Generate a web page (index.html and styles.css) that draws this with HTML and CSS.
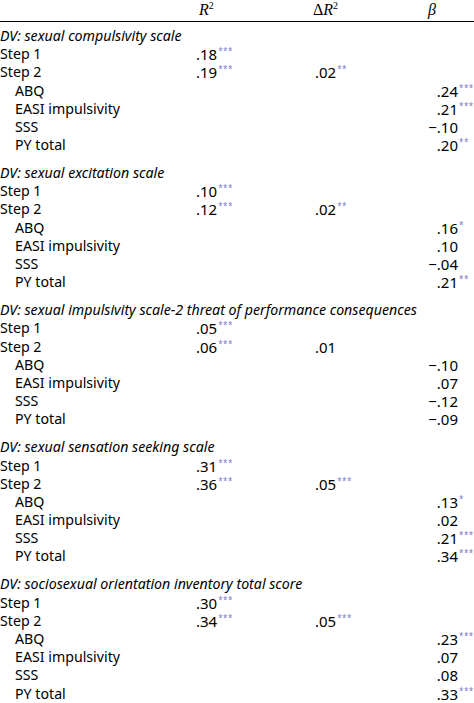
FILE: index.html
```html
<!DOCTYPE html>
<html>
<head>
<meta charset="utf-8">
<link rel="stylesheet" href="styles.css">
</head>
<body>
<div class="tbl">
  <div class="row head">
    <div></div>
    <div class="h r2"><i>R</i><sup>2</sup></div>
    <div class="h dr2">Δ<i>R</i><sup>2</sup></div>
    <div class="h beta"><i>β</i></div>
  </div>

  <div class="section">
    <div class="row"><div class="dv">DV: sexual compulsivity scale</div></div>
    <div class="row"><div>Step 1</div><div class="n">.18<span class="s">***</span></div></div>
    <div class="row"><div>Step 2</div><div class="n">.19<span class="s">***</span></div><div class="n">.02<span class="s">**</span></div></div>
    <div class="row"><div class="ind">ABQ</div><div></div><div></div><div class="b">.24<span class="s">***</span></div></div>
    <div class="row"><div class="ind">EASI impulsivity</div><div></div><div></div><div class="b">.21<span class="s">***</span></div></div>
    <div class="row"><div class="ind">SSS</div><div></div><div></div><div class="b">−.10<span class="s"></span></div></div>
    <div class="row"><div class="ind">PY total</div><div></div><div></div><div class="b">.20<span class="s">**</span></div></div>
  </div>

  <div class="section">
    <div class="row"><div class="dv">DV: sexual excitation scale</div></div>
    <div class="row"><div>Step 1</div><div class="n">.10<span class="s">***</span></div></div>
    <div class="row"><div>Step 2</div><div class="n">.12<span class="s">***</span></div><div class="n">.02<span class="s">**</span></div></div>
    <div class="row"><div class="ind">ABQ</div><div></div><div></div><div class="b">.16<span class="s">*</span></div></div>
    <div class="row"><div class="ind">EASI impulsivity</div><div></div><div></div><div class="b">.10<span class="s"></span></div></div>
    <div class="row"><div class="ind">SSS</div><div></div><div></div><div class="b">−.04<span class="s"></span></div></div>
    <div class="row"><div class="ind">PY total</div><div></div><div></div><div class="b">.21<span class="s">**</span></div></div>
  </div>

  <div class="section">
    <div class="row"><div class="dv">DV: sexual impulsivity scale-2 threat of performance consequences</div></div>
    <div class="row"><div>Step 1</div><div class="n">.05<span class="s">***</span></div></div>
    <div class="row"><div>Step 2</div><div class="n">.06<span class="s">***</span></div><div class="n">.01</div></div>
    <div class="row"><div class="ind">ABQ</div><div></div><div></div><div class="b">−.10<span class="s"></span></div></div>
    <div class="row"><div class="ind">EASI impulsivity</div><div></div><div></div><div class="b">.07<span class="s"></span></div></div>
    <div class="row"><div class="ind">SSS</div><div></div><div></div><div class="b">−.12<span class="s"></span></div></div>
    <div class="row"><div class="ind">PY total</div><div></div><div></div><div class="b">−.09<span class="s"></span></div></div>
  </div>

  <div class="section">
    <div class="row"><div class="dv">DV: sexual sensation seeking scale</div></div>
    <div class="row"><div>Step 1</div><div class="n">.31<span class="s">***</span></div></div>
    <div class="row"><div>Step 2</div><div class="n">.36<span class="s">***</span></div><div class="n">.05<span class="s">***</span></div></div>
    <div class="row"><div class="ind">ABQ</div><div></div><div></div><div class="b">.13<span class="s">*</span></div></div>
    <div class="row"><div class="ind">EASI impulsivity</div><div></div><div></div><div class="b">.02<span class="s"></span></div></div>
    <div class="row"><div class="ind">SSS</div><div></div><div></div><div class="b">.21<span class="s">***</span></div></div>
    <div class="row"><div class="ind">PY total</div><div></div><div></div><div class="b">.34<span class="s">***</span></div></div>
  </div>

  <div class="section">
    <div class="row"><div class="dv">DV: sociosexual orientation inventory total score</div></div>
    <div class="row"><div>Step 1</div><div class="n">.30<span class="s">***</span></div></div>
    <div class="row"><div>Step 2</div><div class="n">.34<span class="s">***</span></div><div class="n">.05<span class="s">***</span></div></div>
    <div class="row"><div class="ind">ABQ</div><div></div><div></div><div class="b">.23<span class="s">***</span></div></div>
    <div class="row"><div class="ind">EASI impulsivity</div><div></div><div></div><div class="b">.07<span class="s"></span></div></div>
    <div class="row"><div class="ind">SSS</div><div></div><div></div><div class="b">.08<span class="s"></span></div></div>
    <div class="row"><div class="ind">PY total</div><div></div><div></div><div class="b">.33<span class="s">***</span></div></div>
  </div>
</div>
</body>
</html>
```

FILE: styles.css
```css
html, body {
  margin: 0;
  padding: 0;
  background: #ffffff;
}
body {
  font-family: "Noto Sans", "Open Sans", sans-serif;
  font-size: 14.2px;
  color: #000;
}
.tbl {
  width: 474px;
}
.row {
  display: grid;
  grid-template-columns: 196px 119px 1fr 60px;
  height: 18.2px;
  line-height: 18.2px;
  white-space: nowrap;
}
.head {
  height: 21px;
  line-height: 20px;
  border-bottom: 1px solid #000;
  margin-bottom: 5px;
  font-family: "Liberation Serif", serif;
  font-size: 16px;
}
.head sup {
  font-size: 10px;
  vertical-align: 6px;
  line-height: 0;
}
.h.r2 { padding-left: 3px; }
.h.dr2 { margin-left: -2px; }
.h.beta { padding-left: 14px; }
.section + .section {
  margin-top: 9.8px;
}
.dv {
  grid-column: 1 / -1;
  font-style: italic;
}
.ind {
  padding-left: 15px;
}
.n, .b {
  font-size: 15px;
  line-height: 18.2px;
}
.b {
  grid-column: 4;
  text-align: right;
}
.s {
  color: #7a78c8;
  font-size: 8px;
  vertical-align: 6px;
  line-height: 0;
  letter-spacing: 0.5px;
  padding-left: 1px;
}
.b .s {
  display: inline-block;
  width: 15px;
  text-align: left;
}
```
